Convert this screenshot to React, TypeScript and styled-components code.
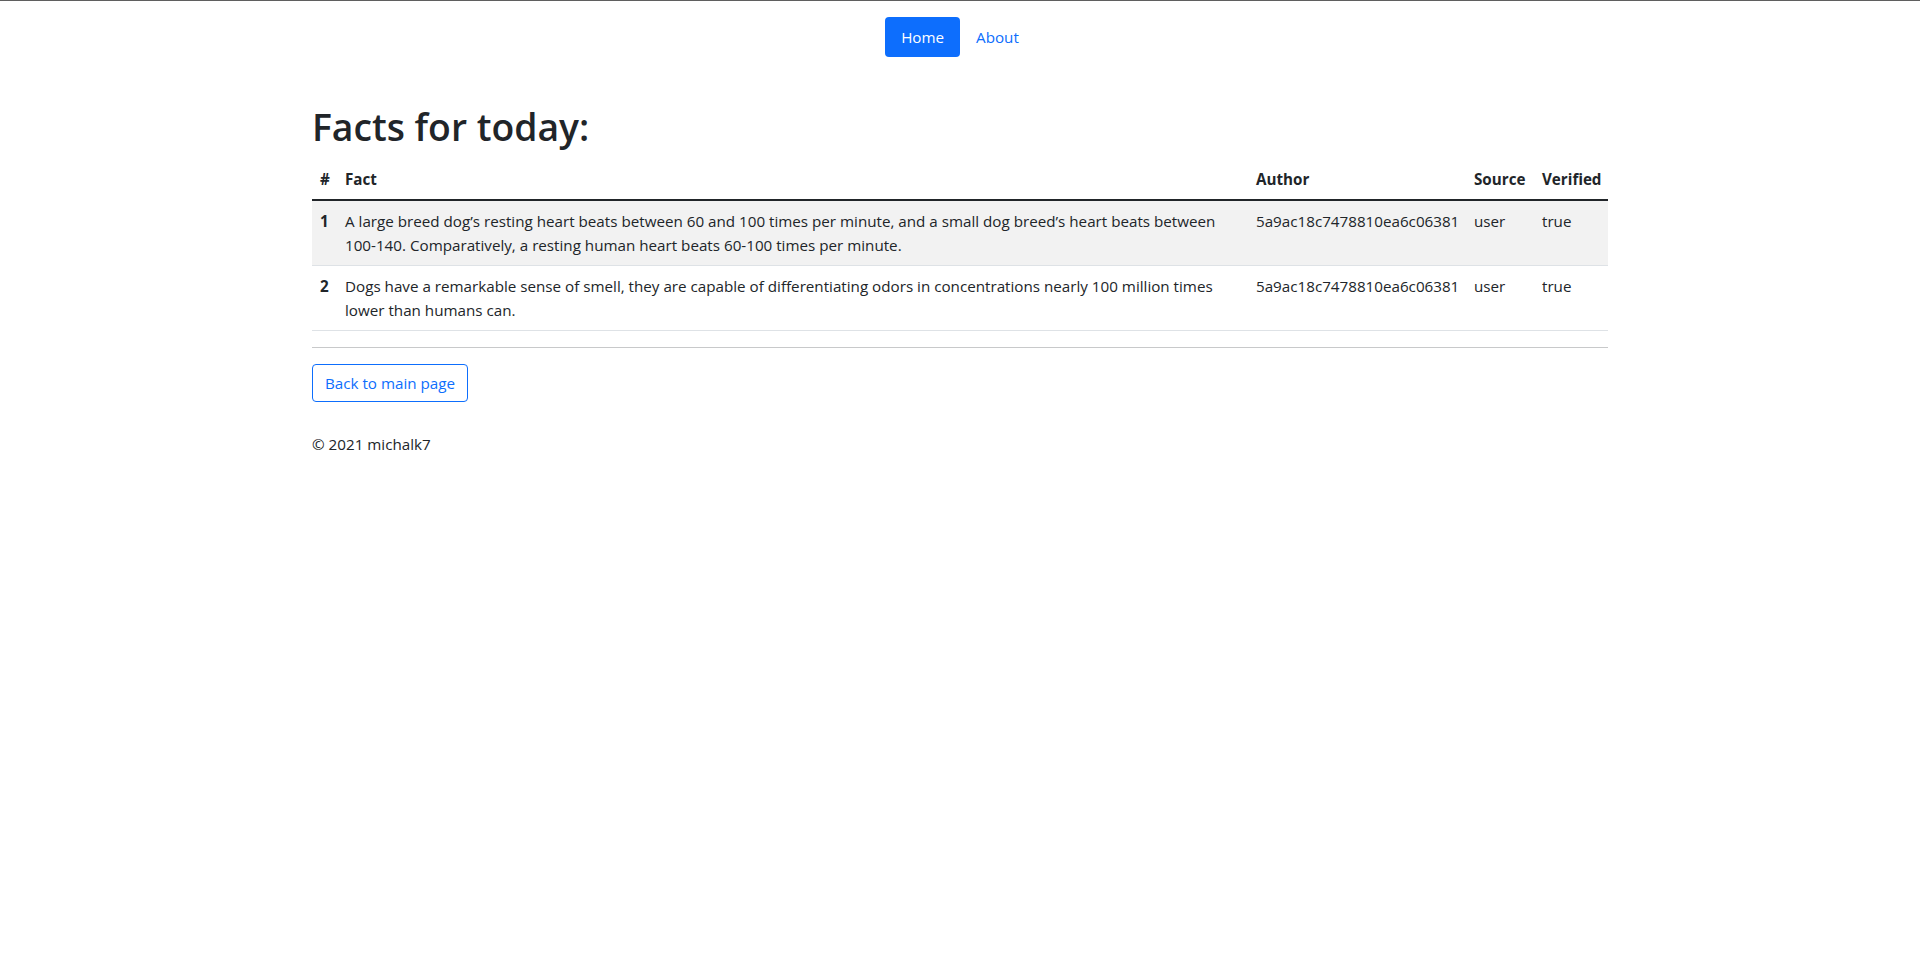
import styled, {createGlobalStyle} from "styled-components";
import {FC} from "react";

const GlobalStyle = createGlobalStyle`
  *, *::before, *::after {
    box-sizing: border-box;
  }

  body {
    margin: 0;
    font-family: "Open Sans", "Noto Sans", sans-serif;
    font-size: 15.2px;
    line-height: 24px;
    color: #212529;
    background: #fff;
    border-top: 1px solid #5f5f5f;
  }
`;

interface Fact {
    id: number;
    text: string;
    author: string;
    source: string;
    verified: boolean;
}

const facts: Fact[] = [
    {
        id: 1,
        text: "A large breed dog’s resting heart beats between 60 and 100 times per minute, and a small dog breed’s heart beats between 100-140. Comparatively, a resting human heart beats 60-100 times per minute.",
        author: "5a9ac18c7478810ea6c06381",
        source: "user",
        verified: true,
    },
    {
        id: 2,
        text: "Dogs have a remarkable sense of smell, they are capable of differentiating odors in concentrations nearly 100 million times lower than humans can.",
        author: "5a9ac18c7478810ea6c06381",
        source: "user",
        verified: true,
    },
];

const Header = styled.header`
  display: flex;
  justify-content: center;
  padding: 16px 0;
`;

const Nav = styled.nav`
  display: flex;
`;

const NavLink = styled.a<{ $active?: boolean }>`
  display: block;
  padding: 8px 16px;
  border-radius: 4px;
  line-height: 24px;
  text-decoration: none;
  cursor: pointer;
  color: ${({$active}) => ($active ? "#fff" : "#0d6efd")};
  background-color: ${({$active}) => ($active ? "#0d6efd" : "transparent")};
`;

const Container = styled.main`
  max-width: 1320px;
  margin: 30px auto 0;
  padding: 0 12px;
`;

const Title = styled.h1`
  margin: 0 0 8px;
  font-size: 37.3px;
  line-height: 48px;
  font-weight: 600;
`;

const Table = styled.table`
  width: 100%;
  border-collapse: collapse;
  table-layout: fixed;
  margin-bottom: 16px;
`;

const HeadCell = styled.th`
  padding: 8px;
  text-align: left;
  font-weight: 700;
  border-bottom: 2px solid #212529;
`;

const Row = styled.tr<{ $striped: boolean }>`
  background-color: ${({$striped}) => ($striped ? "#f2f2f2" : "#fff")};
`;

const Cell = styled.td<{ $bold?: boolean }>`
  padding: 8px;
  vertical-align: top;
  font-weight: ${({$bold}) => ($bold ? 700 : 400)};
  border-bottom: 1px solid #dee2e6;
`;

const Divider = styled.hr`
  margin: 16px 0;
  border: 0;
  border-top: 1px solid #c8c9ca;
`;

const OutlineButton = styled.a`
  display: inline-block;
  padding: 6px 12px;
  border: 1px solid #0d6efd;
  border-radius: 4px;
  color: #0d6efd;
  line-height: 24px;
  text-decoration: none;
  cursor: pointer;
`;

const Footer = styled.footer`
  margin-top: 30px;
`;

const FactsTable: FC<{ items: Fact[] }> = ({items}) => (
    <Table>
        <colgroup>
            <col style={{width: 25}}/>
            <col/>
            <col style={{width: 218}}/>
            <col style={{width: 68}}/>
            <col style={{width: 74}}/>
        </colgroup>
        <thead>
        <tr>
            <HeadCell>#</HeadCell>
            <HeadCell>Fact</HeadCell>
            <HeadCell>Author</HeadCell>
            <HeadCell>Source</HeadCell>
            <HeadCell>Verified</HeadCell>
        </tr>
        </thead>
        <tbody>
        {items.map((fact, index) => (
            <Row key={fact.id} $striped={index % 2 === 0}>
                <Cell $bold>{fact.id}</Cell>
                <Cell>{fact.text}</Cell>
                <Cell>{fact.author}</Cell>
                <Cell>{fact.source}</Cell>
                <Cell>{String(fact.verified)}</Cell>
            </Row>
        ))}
        </tbody>
    </Table>
);

export default function App() {
    return (
        <>
            <GlobalStyle/>
            <Header>
                <Nav>
                    <NavLink $active>Home</NavLink>
                    <NavLink>About</NavLink>
                </Nav>
            </Header>
            <Container>
                <Title>Facts for today:</Title>
                <FactsTable items={facts}/>
                <Divider/>
                <OutlineButton>Back to main page</OutlineButton>
                <Footer>© 2021 michalk7</Footer>
            </Container>
        </>
    );
}
